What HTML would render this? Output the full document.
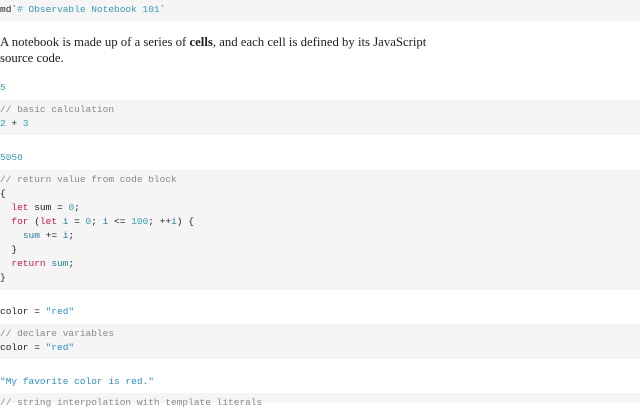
<!DOCTYPE html>
<html><head><style>
body{margin:0;width:640px;height:400px;overflow:hidden;background:#fff;font-family:"Liberation Mono",monospace;font-size:9.5px;}
.g{position:absolute;left:0;width:640px;background:#f5f5f5;}
.l{position:absolute;left:0;white-space:pre;line-height:14px;color:#1b1e23;}
.c{color:#888}.n{color:#3b9ab2}.k{color:#c2185b}.s{color:#2a8fbf}.v{color:#2a7a9a}
.p{position:absolute;left:0;font-family:"Liberation Serif",serif;font-size:12.75px;line-height:16px;color:#1b1e23;width:440px}
</style></head><body>
<div class="g" style="top:0;height:21px"></div>
<div class="l" style="top:3px">md`<span class="n"># Observable Notebook 101</span>`</div>
<div class="p" style="top:34px">A notebook is made up of a series of <b>cells</b>, and each cell is defined by its JavaScript source code.</div>
<div class="l n" style="top:81px">5</div>
<div class="g" style="top:100px;height:35px"></div>
<div class="l" style="top:103px"><span class="c">// basic calculation</span>
<span class="n">2</span> + <span class="n">3</span></div>
<div class="l n" style="top:151px">5050</div>
<div class="g" style="top:170px;height:120px"></div>
<div class="l" style="top:173px"><span class="c">// return value from code block</span>
{
  <span class="k">let</span> sum = <span class="n">0</span>;
  <span class="k">for</span> (<span class="k">let</span> <span class="v">i</span> = <span class="n">0</span>; <span class="v">i</span> &lt;= <span class="n">100</span>; ++<span class="v">i</span>) {
    <span class="v">sum</span> += <span class="v">i</span>;
  }
  <span class="k">return</span> <span class="v">sum</span>;
}</div>
<div class="l" style="top:305px">color = <span class="s">"red"</span></div>
<div class="g" style="top:324px;height:35px"></div>
<div class="l" style="top:327px"><span class="c">// declare variables</span>
color = <span class="s">"red"</span></div>
<div class="l s" style="top:375px">"My favorite color is red."</div>
<div class="g" style="top:393px;height:10px"></div>
<div class="l c" style="top:396px">// string interpolation with template literals</div>
</body></html>
